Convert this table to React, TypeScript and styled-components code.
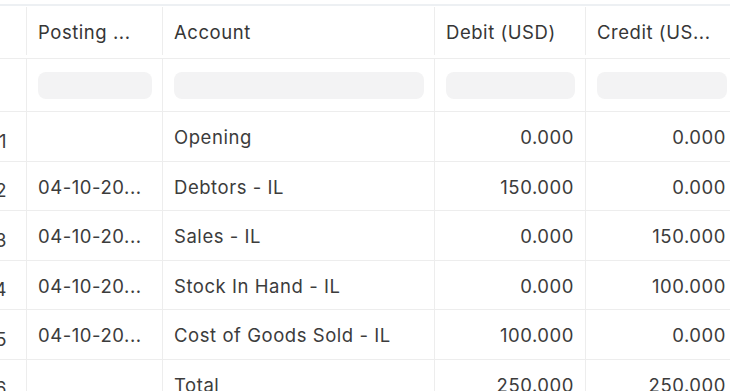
import React from "react";
import styled, { createGlobalStyle } from "styled-components";

const GlobalStyle = createGlobalStyle`
  html, body {
    margin: 0;
    padding: 0;
    background: #ffffff;
    overflow: hidden;
  }
  body {
    font-family: Inter, "Noto Sans", "Liberation Sans", sans-serif;
    color: #383838;
  }
`;

const COLS = "61px 136px 272px 151px 152px";

export const Page = styled.div`
  padding-top: 4px;
  margin-left: -34px;
  width: 800px;
`;

export const Table = styled.div`
  border-top: 2px solid #edf0f3;
`;

export const Row = styled.div<{ $h: number; $pad?: string }>`
  display: grid;
  grid-template-columns: ${COLS};
  height: ${(p) => p.$h}px;
  box-sizing: border-box;
  border-bottom: 1px solid #ededed;
  padding: ${(p) => p.$pad ?? "0"};
`;

export const HeadCell = styled.div`
  display: flex;
  align-items: center;
  padding: 2px 12px 0 11px;
  border-right: 1px solid #ededed;
  font-size: 18.5px;
  font-weight: 370;
  letter-spacing: 0.55px;
  color: #363636;
  white-space: nowrap;
  overflow: hidden;
`;

export const FilterCell = styled.div`
  display: flex;
  align-items: center;
  padding: 0 10px 0 11px;
  border-right: 1px solid #ededed;
`;

export const FilterBox = styled.div`
  flex: 1;
  height: 27px;
  border-radius: 8px;
  background: #f3f3f4;
`;

export const Cell = styled.div<{ $align?: "left" | "right" }>`
  display: flex;
  align-items: center;
  justify-content: ${(p) => (p.$align === "right" ? "flex-end" : "flex-start")};
  padding: 2px 11px 0 11px;
  border-right: 1px solid #ededed;
  font-size: 18.5px;
  font-weight: 370;
  letter-spacing: 0.55px;
  color: #3c3c3c;
  white-space: nowrap;
  overflow: hidden;
`;

export const IndexCell = styled(Cell)`
  justify-content: flex-end;
  padding: 9px 19px 0 0;
`;

const rows = [
  { date: "", account: "Opening", debit: "0.000", credit: "0.000" },
  { date: "04-10-20...", account: "Debtors - IL", debit: "150.000", credit: "0.000" },
  { date: "04-10-20...", account: "Sales - IL", debit: "0.000", credit: "150.000" },
  { date: "04-10-20...", account: "Stock In Hand - IL", debit: "0.000", credit: "100.000" },
  { date: "04-10-20...", account: "Cost of Goods Sold - IL", debit: "100.000", credit: "0.000" },
  { date: "", account: "Total", debit: "250.000", credit: "250.000" },
];

const headers = ["Posting ...", "Account", "Debit (USD)", "Credit (US..."];

const App = () => {
  return (
    <>
      <GlobalStyle />
      <Page>
        <Table>
          <Row $h={53} $pad="1px 0 3px 0">
            <HeadCell />
            {headers.map((h) => (
              <HeadCell key={h}>{h}</HeadCell>
            ))}
          </Row>
          <Row $h={53}>
            <FilterCell />
            {headers.map((h) => (
              <FilterCell key={h}>
                <FilterBox />
              </FilterCell>
            ))}
          </Row>
          {rows.map((r, i) => (
            <Row key={i} $h={49.5}>
              <IndexCell>{i + 1}</IndexCell>
              <Cell>{r.date}</Cell>
              <Cell>{r.account}</Cell>
              <Cell $align="right">{r.debit}</Cell>
              <Cell $align="right">{r.credit}</Cell>
            </Row>
          ))}
        </Table>
      </Page>
    </>
  );
};

export default App;
